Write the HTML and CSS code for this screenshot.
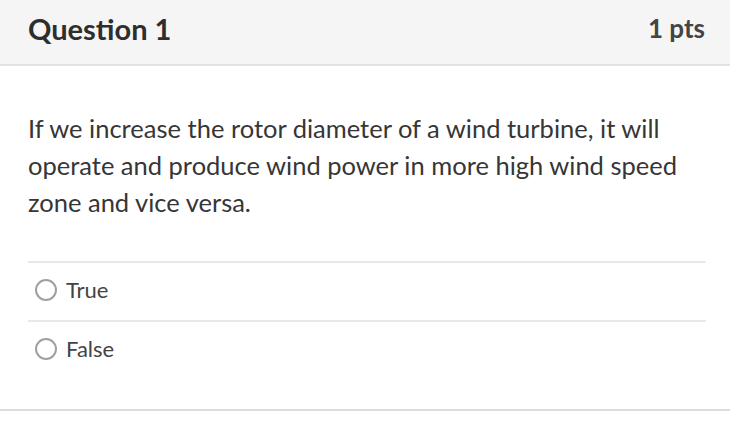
FILE: index.html
```html
<!DOCTYPE html>
<html lang="en">

<head>
    <meta charset="UTF-8">
    <meta name="viewport" content="width=device-width, initial-scale=1.0">
    <title>Question 1</title>
    <link rel="stylesheet" href="styles.css">
</head>

<body>

    <!-- Question Card -->
    <div class="question">
        <div class="question-header">
            <h2>Question 1</h2>
            <span class="points">1 pts</span>
        </div>

        <div class="question-text">
            If we increase the rotor diameter of a wind turbine, it will operate and produce wind power in more high wind speed zone and vice versa.
        </div>

        <div class="answers">
            <label class="answer">
                <span class="radio"></span>
                <span>True</span>
            </label>
            <label class="answer">
                <span class="radio"></span>
                <span>False</span>
            </label>
        </div>
    </div>

</body>

</html>
```

FILE: styles.css
```css
body {
    font-family: Lato, "Open Sans", sans-serif;
    background: #fff;
    color: #363636;
    margin: 0;
    padding: 0;
}

.question {
    border-bottom: 2px solid #dcdcdc;
    padding-bottom: 30px;
}

.question-header {
    display: flex;
    justify-content: space-between;
    align-items: center;
    height: 56px;
    padding: 0 25px 8px 28px;
    background: #f5f5f5;
    border-bottom: 2px solid #e2e2e2;
}

.question-header h2 {
    margin: 0;
    font-size: 29px;
    font-weight: bold;
    color: #2e2e2e;
}

.points {
    font-size: 26px;
    font-weight: bold;
    color: #444;
}

.question-text {
    padding: 44px 28px 0;
    font-size: 25.5px;
    line-height: 37px;
    width: 665px;
}

.answers {
    margin: 40px 24px 0 28px;
}

.answer {
    display: flex;
    align-items: center;
    gap: 9px;
    height: 53px;
    padding: 0 0 4px 7px;
    border-top: 2px solid #e8e8e8;
    font-size: 22px;
    color: #444;
}

.radio {
    width: 18px;
    height: 18px;
    border: 2px solid #a0a0a0;
    border-radius: 50%;
    background: #fff;
}
```
